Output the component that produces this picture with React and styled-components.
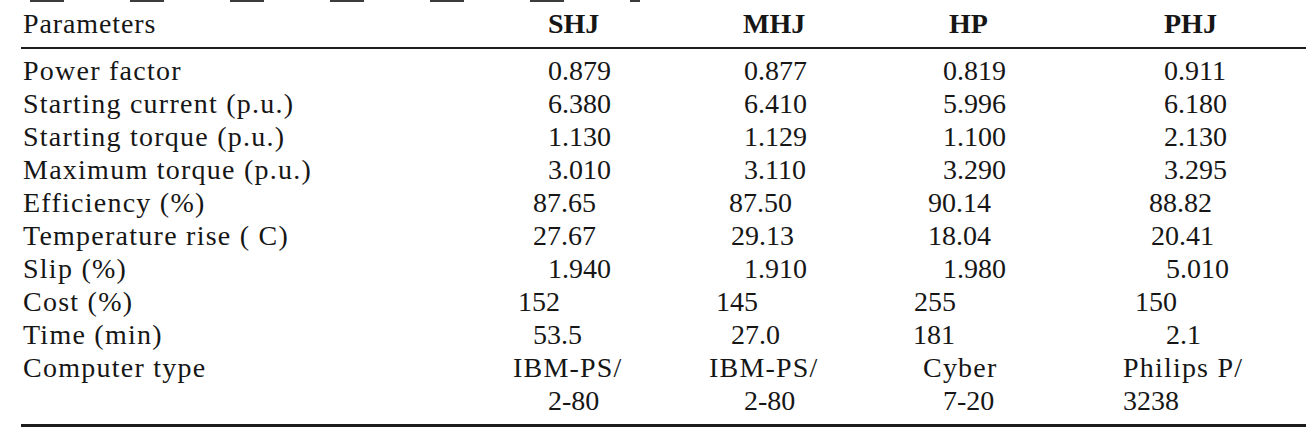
import React from 'react'
import styled, { createGlobalStyle } from 'styled-components'

const GlobalStyle = createGlobalStyle`
  html,
  body {
    margin: 0;
    background: #fff;
  }

  body {
    color: #161616;
    font-family: "Liberation Serif", "Times New Roman", serif;
  }
`

const columns = ['SHJ', 'MHJ', 'HP', 'PHJ']
const headShift = [0, -1, 6, 0]

// each value: [text, shift in px from the column's left edge]
const rows = [
  { label: 'Power factor', values: [['0.879', 0], ['0.877', 0], ['0.819', 0], ['0.911', 0]] },
  { label: 'Starting current (p.u.)', values: [['6.380', 0], ['6.410', 0], ['5.996', 0], ['6.180', 0]] },
  { label: 'Starting torque (p.u.)', values: [['1.130', 0], ['1.129', 0], ['1.100', 0], ['2.130', 0]] },
  { label: 'Maximum torque (p.u.)', values: [['3.010', 0], ['3.110', 0], ['3.290', 0], ['3.295', 0]] },
  { label: 'Efficiency (%)', values: [['87.65', -15], ['87.50', -15], ['90.14', -15], ['88.82', -15]] },
  { label: 'Temperature rise ( C)', values: [['27.67', -15], ['29.13', -13], ['18.04', -15], ['20.41', -13]] },
  { label: 'Slip (%)', values: [['1.940', 0], ['1.910', 0], ['1.980', 0], ['5.010', 2]] },
  { label: 'Cost (%)', values: [['152', -30], ['145', -28], ['255', -29], ['150', -29]] },
  { label: 'Time (min)', values: [['53.5', -15], ['27.0', -13], ['181', -30], ['2.1', 2]] },
  {
    label: 'Computer type',
    values: [
      [['IBM-PS/', -35], ['2-80', 0]],
      [['IBM-PS/', -35], ['2-80', 0]],
      [['Cyber', -20], ['7-20', 0]],
      [['Philips P/', -41], ['3238', -41]],
    ],
  },
]

const Page = styled.div`
  background: #fff;
  height: 432px;
  overflow: hidden;
  width: 1316px;
`

// what is left of the rule above the table, cut off at the top edge
const TopEdge = styled.div`
  background: repeating-linear-gradient(90deg, #3c3c3c 0 34px, transparent 34px 100px);
  height: 2px;
  margin-left: 30px;
  width: 610px;
`

const Table = styled.div`
  display: flex;
  flex-direction: column;
  font-size: 28px;
  line-height: 33px;
  margin-left: 21px;
  width: 1285px;
`

const Row = styled.div`
  display: grid;
  grid-template-columns: 527px 196px 199px 221px 142px;
`

const HeadRow = styled(Row)`
  border-bottom: 2px solid #1c1c1c;
  padding: 5px 0 7px;
`

const Body = styled.div`
  border-bottom: 3px solid #1c1c1c;
  display: flex;
  flex-direction: column;
  padding: 5px 0 7px;
`

const Label = styled.div`
  letter-spacing: 1.25px;
  padding-left: 2px;
  white-space: nowrap;
`

const HeadLabel = styled(Label)`
  letter-spacing: 0.9px;
`

const HeadCell = styled.div`
  font-weight: 700;
  margin-left: ${p => p.$shift}px;
  white-space: nowrap;
`

const Cell = styled.div`
  display: flex;
  flex-direction: column;
`

const Line = styled.span`
  letter-spacing: ${p => (p.$word ? '1.2px' : '0')};
  margin-left: ${p => p.$shift}px;
  white-space: nowrap;
`

const isWord = text => /[A-Za-z]/.test(text)

function Value({ value }) {
  const lines = Array.isArray(value[0]) ? value : [value]
  return (
    <Cell>
      {lines.map(([text, shift], i) => (
        <Line key={i} $shift={shift} $word={isWord(text)}>
          {text}
        </Line>
      ))}
    </Cell>
  )
}

export default function App() {
  return (
    <>
      <GlobalStyle />
      <Page>
        <TopEdge />
        <Table>
          <HeadRow>
            <HeadLabel>Parameters</HeadLabel>
            {columns.map((name, i) => (
              <HeadCell key={name} $shift={headShift[i]}>
                {name}
              </HeadCell>
            ))}
          </HeadRow>
          <Body>
            {rows.map(row => (
              <Row key={row.label}>
                <Label>{row.label}</Label>
                {row.values.map((value, i) => (
                  <Value key={i} value={value} />
                ))}
              </Row>
            ))}
          </Body>
        </Table>
      </Page>
    </>
  )
}
